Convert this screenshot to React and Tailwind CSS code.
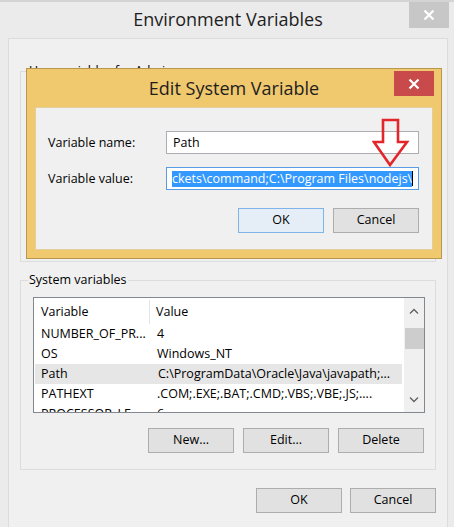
import React from 'react';

const rows = [
  ['NUMBER_OF_PR...', '4'],
  ['OS', 'Windows_NT'],
  ['Path', 'C:\\ProgramData\\Oracle\\Java\\javapath;...'],
  ['PATHEXT', '.COM;.EXE;.BAT;.CMD;.VBS;.VBE;.JS;....'],
  ['PROCESSOR_LE...', '6'],
];

const Btn = ({ children, primary }) => (
  <div
    className={
      primary
        ? 'w-[86px] h-[25px] flex items-center justify-center border border-[#7eb4ea] bg-[#e5eef7] text-[12.5px] text-black'
        : 'w-[86px] h-[25px] flex items-center justify-center border border-[#adadad] bg-[#e1e1e1] text-[12.5px] text-black'
    }
  >
    {children}
  </div>
);

const Chevron = ({ up }) => (
  <svg width="10" height="6" viewBox="0 0 10 6" className="text-[#606060]">
    <path
      d={up ? 'M1 5.5 L5 1.5 L9 5.5' : 'M1 0.5 L5 4.5 L9 0.5'}
      fill="none"
      stroke="currentColor"
      strokeWidth="1.3"
    />
  </svg>
);

export default function App() {
  return (
    <div className="relative w-[454px] h-[527px] overflow-hidden bg-[#ebebeb] border-t-2 border-[#d4d4d4] font-['Open_Sans',sans-serif] text-black">
      {/* title bar */}
      <div className="relative h-[36px] flex items-center justify-center">
        <span className="text-[18px] text-[#1e1e1e] mt-[-1px] ml-[2px]">Environment Variables</span>
        <div className="absolute right-[5px] top-0 w-[40px] h-[26px] bg-[#c7c7c7] flex items-center justify-center">
          <svg width="12" height="12" viewBox="0 0 12 12">
            <path d="M1.5 1.5 L10.5 10.5 M10.5 1.5 L1.5 10.5" stroke="#fff" strokeWidth="2.2" />
          </svg>
        </div>
      </div>

      {/* client area */}
      <div className="ml-[8px] mr-[6px] h-[500px] border border-[#dcdcdc] bg-[#f0f0f0] px-[11px] pt-[24px] flex flex-col text-[12.5px]">
        <fieldset className="h-[199px] border border-[#dcdcdc]">
          <legend className="ml-[7px] px-[1px] leading-[16px]">User variables for Admin</legend>
        </fieldset>

        <fieldset className="mt-[10px] h-[198px] border border-[#dcdcdc]">
          <legend className="ml-[7px] px-[1px] leading-[16px]">System variables</legend>
          <div className="pl-[12px] pr-[10px]">
            <div className="mt-[9px] h-[116px] border border-[#828790] bg-white flex overflow-hidden">
              <div className="flex-1 flex flex-col overflow-hidden pt-[2px]">
                <div className="h-[24px] flex shrink-0">
                  <div className="w-[116px] pl-[7px] flex items-center border-r border-[#e5e5e5]">Variable</div>
                  <div className="flex-1 pl-[6px] flex items-center">Value</div>
                </div>
                {rows.map(([name, value], i) => (
                  <div
                    key={name}
                    className={
                      i === 2
                        ? 'h-[20px] shrink-0 flex items-center bg-[#e6e6e6] ml-[1px] mr-[2px]'
                        : 'h-[20px] shrink-0 flex items-center'
                    }
                  >
                    <div className={i === 2 ? 'w-[116px] pl-[6px] whitespace-nowrap' : 'w-[116px] pl-[7px] whitespace-nowrap'}>{name}</div>
                    <div className="flex-1 pl-[7px] whitespace-nowrap overflow-hidden">{value}</div>
                  </div>
                ))}
              </div>
              <div className="w-[20px] bg-[#f0f0f0] flex flex-col items-center">
                <div className="h-[26px] flex items-center justify-center w-full">
                  <Chevron up />
                </div>
                <div className="mt-[4px] h-[21px] w-[19px] bg-[#cdcdcd]"></div>
                <div className="flex-1"></div>
                <div className="h-[24px] flex items-center justify-center w-full">
                  <Chevron />
                </div>
              </div>
            </div>
            <div className="mt-[15px] flex justify-end gap-[9px] pr-[1px]">
              <Btn>New...</Btn>
              <Btn>Edit...</Btn>
              <Btn>Delete</Btn>
            </div>
          </div>
        </fieldset>

        <div className="mt-[18px] flex justify-end gap-[8px]">
          <Btn>OK</Btn>
          <Btn>Cancel</Btn>
        </div>
      </div>

      {/* Edit System Variable dialog over the window */}
      <div className="absolute left-[26px] top-[66px] w-[416px] h-[191px] bg-[#f0c86e] border border-[#b9974e] flex flex-col">
        <div className="relative h-[38px] flex items-center justify-center shrink-0">
          <span className="text-[18px] text-[#1e1e1e]">Edit System Variable</span>
          <div className="absolute right-[7px] top-[2px] w-[40px] h-[25px] bg-[#c84a4a] flex items-center justify-center">
            <svg width="12" height="12" viewBox="0 0 12 12">
              <path d="M1.5 1.5 L10.5 10.5 M10.5 1.5 L1.5 10.5" stroke="#fff" strokeWidth="2.2" />
            </svg>
          </div>
        </div>
        <div className="mx-[8px] mb-[8px] flex-1 border border-[#e2cf9c] bg-[#f0f0f0] pl-[12px] pr-[13px] pt-[23px] text-[12.5px]">
          <div className="flex items-center h-[23px]">
            <div className="w-[118px] pt-[1px]">Variable name:</div>
            <div className="flex-1 h-[23px] border border-[#abadb3] bg-white flex items-center pl-[6px] pt-[1px]">Path</div>
          </div>
          <div className="mt-[13px] flex items-center h-[23px]">
            <div className="w-[118px] pt-[1px]">Variable value:</div>
            <div className="flex-1 h-[23px] border border-[#569de5] bg-white flex items-center pl-[5px] overflow-hidden whitespace-nowrap">
              <span className="bg-[#3399ff] text-white leading-[16px]">ckets\command;C:\Program Files\nodejs\</span>
              <span className="w-[1px] h-[15px] bg-black shrink-0"></span>
            </div>
          </div>
          <div className="mt-[18px] flex justify-end gap-[9px]">
            <Btn primary>OK</Btn>
            <Btn>Cancel</Btn>
          </div>
        </div>
      </div>

      {/* red annotation arrow */}
      <svg className="absolute left-[372px] top-[116px]" width="38" height="50" viewBox="0 0 38 50">
        <polygon
          points="11,2 26,2 26,24 35,24 18,47 2,24 11,24"
          fill="none"
          stroke="#e3262b"
          strokeWidth="2.6"
          strokeLinejoin="miter"
        />
      </svg>
    </div>
  );
}
